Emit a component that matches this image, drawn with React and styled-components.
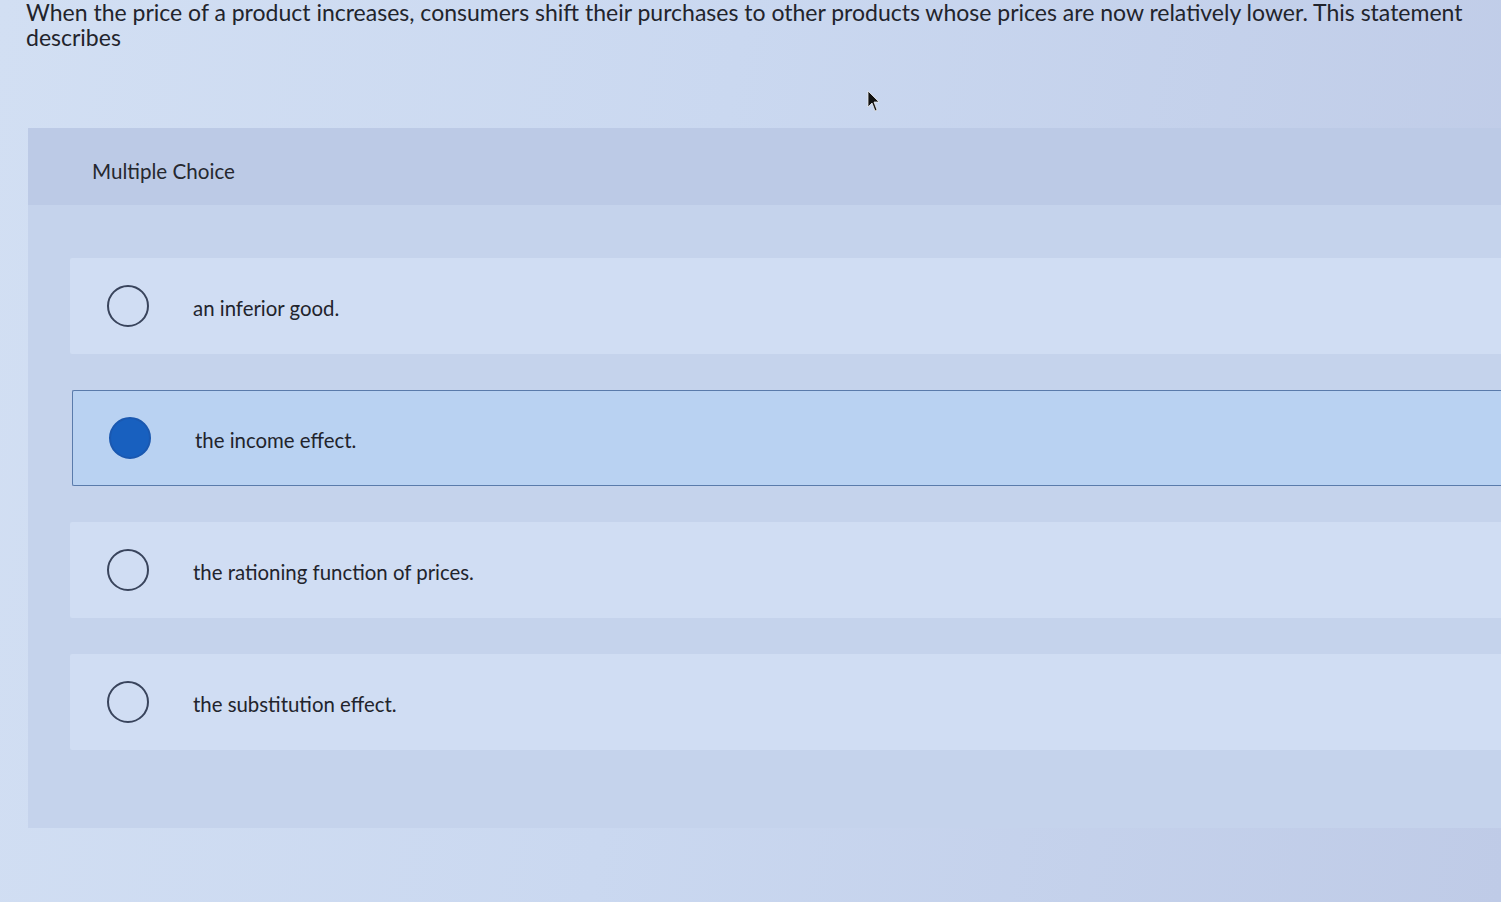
import React from "react";
import styled, { createGlobalStyle } from "styled-components";

const Global = createGlobalStyle`
  html, body { margin: 0; padding: 0; }
  body { font-family: "Lato", "Open Sans", "Liberation Sans", sans-serif; }
`;

const Page = styled.div`
  position: relative;
  width: 1501px;
  height: 902px;
  overflow: hidden;
  background: linear-gradient(100deg, #d2dff3 0%, #cad8f0 45%, #bfcbe7 100%);
  color: #24262f;
`;

const Question = styled.p`
  margin: 0;
  padding: 0 20px 0 26px;
  font-size: 23px;
  line-height: 25px;
  color: #22242c;
`;

const Panel = styled.section`
  margin: 78px 0 0 28px;
  background: #c5d3ec;
  padding-bottom: 78px;
`;

const Header = styled.div`
  height: 77px;
  display: flex;
  align-items: center;
  padding: 8px 0 0 64px;
  box-sizing: border-box;
  background: #bccae6;
  font-size: 20.6px;
  color: #26282f;
`;

const List = styled.div`
  display: flex;
  flex-direction: column;
  gap: 36px;
  padding: 53px 0 0 42px;
`;

const Option = styled.label`
  display: flex;
  align-items: center;
  gap: 44px;
  height: 96px;
  box-sizing: border-box;
  padding-left: ${(p) => (p.$selected ? "36px" : "37px")};
  background: ${(p) => (p.$selected ? "#b9d2f2" : "#d0ddf3")};
  border: ${(p) => (p.$selected ? "1px solid #5a7bab" : "none")};
  border-right: none;
  border-radius: 2px 0 0 2px;
  margin-left: ${(p) => (p.$selected ? "2px" : "0")};
  font-size: 20.4px;
  color: #22242c;
  cursor: pointer;
`;

const Radio = styled.span`
  flex: none;
  width: 42px;
  height: 42px;
  box-sizing: border-box;
  border-radius: 50%;
  border: 2px solid ${(p) => (p.$checked ? "#1a58b0" : "#39445c")};
  background: ${(p) => (p.$checked ? "#1860bf" : "transparent")};
`;

const Label = styled.span`
  padding-top: 4px;
`;

const Cursor = styled.svg`
  position: absolute;
  left: 867px;
  top: 90px;
`;

const options = [
  "an inferior good.",
  "the income effect.",
  "the rationing function of prices.",
  "the substitution effect.",
];

export default function App() {
  const selected = 1;
  return (
    <Page>
      <Global />
      <Question>
        When the price of a product increases, consumers shift their purchases to other products whose prices are now relatively lower. This statement describes
      </Question>
      <Panel>
        <Header>Multiple Choice</Header>
        <List>
          {options.map((o, i) => (
            <Option key={o} $selected={i === selected}>
              <Radio $checked={i === selected} />
              <Label>{o}</Label>
            </Option>
          ))}
        </List>
      </Panel>
      <Cursor width="14" height="24" viewBox="0 0 14 24">
        <path d="M1 1 L1 17 L5 13 L8 21 L10 20 L7 12 L12 12 Z" fill="#111" stroke="#eee" strokeWidth="0.8" />
      </Cursor>
    </Page>
  );
}
